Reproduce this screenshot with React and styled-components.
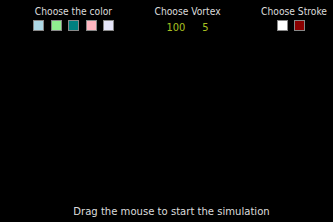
import styled, { createGlobalStyle } from 'styled-components'

const Global = createGlobalStyle`
  html, body { margin: 0; padding: 0; background: #000; }
  body { width: 333px; height: 222px; overflow: hidden; }
`

const colors = ['#add8e6', '#90ee90', '#008080', '#ffb6c1', '#e6e6fa']
const strokes = ['#ffffff', '#8b0000']

const App = () => {
  return (
    <Page>
      <Global />
      <Controls>
        <Group>
          <Title>Choose the color</Title>
          <Swatches>
            {colors.map(c => <Swatch key={c} color={c} />)}
          </Swatches>
        </Group>
        <Group>
          <Title>Choose Vortex</Title>
          <Numbers>
            <span>100</span>
            <span>5</span>
          </Numbers>
        </Group>
        <Group>
          <Title>Choose Stroke</Title>
          <Swatches gap="6px" offset="7px">
            {strokes.map(c => <Swatch key={c} color={c} />)}
          </Swatches>
        </Group>
      </Controls>
      <Hint>Drag the mouse to start the simulation</Hint>
    </Page>
  )
}

const Page = styled.div`
  width: 333px;
  height: 222px;
  background: #000;
  display: flex;
  flex-direction: column;
  justify-content: space-between;
  font-family: 'DejaVu Sans Condensed', 'DejaVu Sans', sans-serif;
  color: #dcdcdc;
`

const Controls = styled.div`
  display: flex;
  justify-content: space-between;
  padding: 5px 6px 0 33px;
`

const Group = styled.div`
  display: flex;
  flex-direction: column;
  align-items: center;
`

const Title = styled.div`
  font-size: 10.2px;
  line-height: 13px;
`

const Swatches = styled.div`
  display: flex;
  gap: ${p => p.gap || '6.5px'};
  margin-top: 2px;
  margin-right: ${p => p.offset || '0'};
`

const Swatch = styled.div`
  width: 9px;
  height: 9px;
  background: ${p => p.color};
  border: 1px solid #888;
`

const Numbers = styled.div`
  display: flex;
  gap: 17px;
  margin-top: 3px;
  font-size: 11px;
  color: #a8c020;
`

const Hint = styled.div`
  text-align: center;
  font-size: 11.2px;
  padding: 0 0 4px 10px;
`

export default App
